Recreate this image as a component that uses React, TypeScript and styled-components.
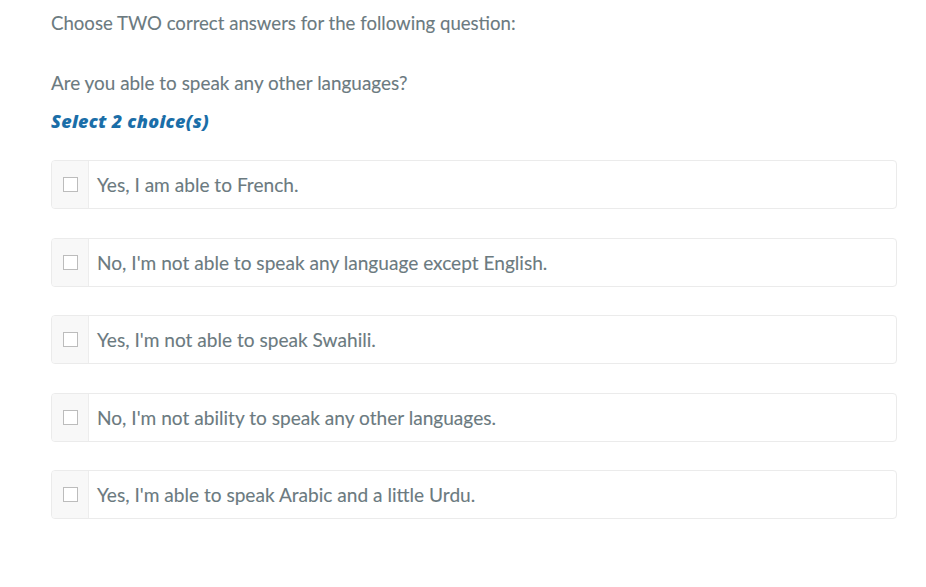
import React from "react";
import styled, { createGlobalStyle } from "styled-components";

const GlobalStyle = createGlobalStyle`
  body {
    margin: 0;
    background: #ffffff;
    font-family: Lato, "Open Sans", sans-serif;
  }
`;

const Page = styled.div`
  padding: 10px 29px 40px 51px;
  color: #6b7a80;
`;

const Instruction = styled.p`
  margin: 0;
  font-size: 18.6px;
  line-height: 26px;
  -webkit-text-stroke: 0.1px #6b7a80;
`;

const Question = styled(Instruction)`
  margin-top: 34px;
  font-size: 18.9px;
`;

const Hint = styled.div`
  margin-top: 12px;
  font-family: "Open Sans", sans-serif;
  font-size: 18px;
  line-height: 27px;
  letter-spacing: 0.3px;
  font-weight: 800;
  font-style: italic;
  color: #1a6ea8;
`;

const ChoiceList = styled.div`
  margin-top: 25px;
  display: flex;
  flex-direction: column;
  gap: 28.5px;
`;

const Choice = styled.label`
  display: flex;
  align-items: stretch;
  height: 49px;
  box-sizing: border-box;
  border: 1px solid #ebebeb;
  border-radius: 4px;
  overflow: hidden;
  cursor: pointer;
`;

const BoxCell = styled.div`
  width: 36px;
  flex: none;
  display: flex;
  align-items: center;
  justify-content: center;
  background: #f8f8f8;
  border-right: 1px solid #ededed;
`;

const Box = styled.span`
  width: 15px;
  height: 15px;
  box-sizing: border-box;
  border: 1px solid #bcbcbc;
  background: #ffffff;
`;

const ChoiceText = styled.span`
  display: flex;
  align-items: center;
  padding-left: 8px;
  font-size: 19.1px;
  color: #6b7a80;
  -webkit-text-stroke: 0.1px #6b7a80;
`;

const choices = [
  "Yes, I am able to French.",
  "No, I'm not able to speak any language except English.",
  "Yes, I'm not able to speak Swahili.",
  "No, I'm not ability to speak any other languages.",
  "Yes, I'm able to speak Arabic and a little Urdu.",
];

const App = () => {
  return (
    <>
      <GlobalStyle />
      <Page>
        <Instruction>Choose TWO correct answers for the following question:</Instruction>
        <Question>Are you able to speak any other languages?</Question>
        <Hint>Select 2 choice(s)</Hint>
        <ChoiceList>
          {choices.map((text) => (
            <Choice key={text}>
              <BoxCell>
                <Box />
              </BoxCell>
              <ChoiceText>{text}</ChoiceText>
            </Choice>
          ))}
        </ChoiceList>
      </Page>
    </>
  );
};

export default App;
